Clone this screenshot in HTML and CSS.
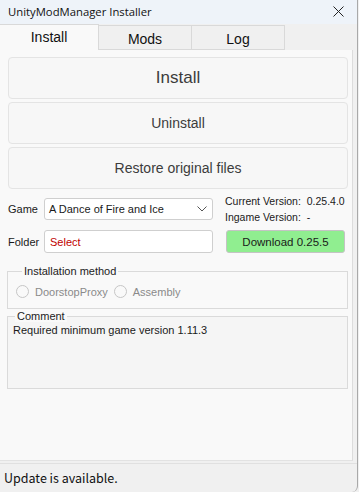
FILE: index.html
```html
<!DOCTYPE html>
<html lang="en">
<head>
<meta charset="UTF-8" />
<meta name="viewport" content="width=device-width, initial-scale=1" />
<title>UnityModManager Installer</title>
<link rel="stylesheet" href="styles.css">
</head>
<body>

<div class="window">
  <header class="titlebar">
    <span class="title">UnityModManager Installer</span>
    <svg class="close" width="11" height="11" viewBox="0 0 11 11">
      <path d="M0.5 0.5 L10.5 10.5 M10.5 0.5 L0.5 10.5" stroke="#222" stroke-width="1" fill="none"/>
    </svg>
  </header>

  <nav class="tabs">
    <div class="tab active">Install</div>
    <div class="tab">Mods</div>
    <div class="tab">Log</div>
  </nav>

  <main class="panel">
    <button class="btn btn-big">Install</button>
    <button class="btn">Uninstall</button>
    <button class="btn">Restore original files</button>

    <div class="form">
      <label class="lbl">Game</label>
      <div class="combo">
        <span>A Dance of Fire and Ice</span>
        <svg width="10" height="6" viewBox="0 0 10 6">
          <path d="M0.5 0.5 L5 5 L9.5 0.5" stroke="#555" stroke-width="1" fill="none"/>
        </svg>
      </div>
      <div class="versions">
        <div>Current Version:&nbsp; 0.25.4.0</div>
        <div>Ingame Version:&nbsp; -</div>
      </div>

      <label class="lbl">Folder</label>
      <div class="field">Select</div>
      <button class="btn-download">Download 0.25.5</button>
    </div>

    <fieldset class="group">
      <legend>Installation method</legend>
      <div class="radios">
        <label class="radio"><span class="dot"></span>DoorstopProxy</label>
        <label class="radio"><span class="dot"></span>Assembly</label>
      </div>
    </fieldset>

    <fieldset class="group comment">
      <legend>Comment</legend>
      <p>Required minimum game version 1.11.3</p>
    </fieldset>
  </main>

  <footer class="status">Update is available.</footer>
</div>

</body>
</html>
```

FILE: styles.css
```css
* {
  box-sizing: border-box;
  margin: 0;
  padding: 0;
}

body {
  background: #f0f0f0;
  width: 359px;
  height: 492px;
  overflow: hidden;
  font-family: "Liberation Sans", Arial, sans-serif;
  font-size: 11px;
  color: #1a1a1a;
}

.window {
  height: 492px;
  width: 358px;
  display: flex;
  flex-direction: column;
  border-right: 1px solid #a9a9a9;
  border-bottom-right-radius: 6px;
}

.titlebar {
  height: 24px;
  background: #eef3f9;
  display: flex;
  align-items: center;
  justify-content: space-between;
  padding: 0 13px 2px 8px;
}

.title {
  font-family: "Open Sans", "Noto Sans", sans-serif;
  font-size: 11.3px;
  color: #111;
}

.tabs {
  height: 26px;
  display: flex;
  align-items: flex-end;
  background: #f0f0f0;
  padding-right: 4px;
}

.tab {
  width: 94px;
  height: 25px;
  border: 1px solid #d9d9d9;
  margin-left: -1px;
  font-size: 14px;
  text-align: center;
  line-height: 26px;
  color: #111;
  background: #f0f0f0;
}

.tab.active {
  width: 99px;
  height: 26px;
  margin-left: 0;
  border-left: none;
  background: #f9f9f9;
  border-bottom: none;
  line-height: 24px;
}

.panel {
  flex: 1;
  background: #f9f9f9;
  margin-right: 4px;
  border-right: 1px solid #dcdcdc;
  border-bottom: 1px solid #e2e2e2;
  padding: 7px 4px 0 8px;
  display: flex;
  flex-direction: column;
}

.btn {
  height: 42px;
  width: 100%;
  margin-bottom: 3px;
  background: #f7f7f7;
  border: 1px solid #e4e4e4;
  border-radius: 4px;
  font-family: "Liberation Sans", Arial, sans-serif;
  font-size: 14px;
  color: #3c3c3c;
}

.btn-big {
  font-size: 17px;
}

.form {
  display: grid;
  grid-template-columns: 36px 169px 1fr;
  grid-template-rows: 23px 23px;
  row-gap: 10px;
  margin-top: 5px;
  align-items: center;
}

.combo,
.field {
  height: 22px;
  background: #fff;
  border: 1px solid #cfcfcf;
  border-radius: 3px;
  display: flex;
  align-items: center;
  justify-content: space-between;
  padding: 0 5px 0 4px;
}

.field {
  height: 23px;
  color: #c00000;
  padding-left: 5px;
}

.versions {
  align-self: start;
  margin: -4px 0 0 12px;
  line-height: 16px;
  font-size: 10.5px;
  white-space: nowrap;
}

.btn-download {
  height: 23px;
  width: 119px;
  margin-left: 13px;
  background: #90ee90;
  border: 1px solid #c4c4c4;
  border-radius: 3px;
  font-family: "Liberation Sans", Arial, sans-serif;
  font-size: 11.5px;
  color: #1a1a1a;
}

.group {
  border: 1px solid #dadada;
  padding: 0 8px;
  margin: 12px 0 0 -1px;
}

.group legend {
  margin-left: 6px;
  padding: 0 2px;
  color: #222;
}

.radios {
  display: flex;
  gap: 6px;
  height: 31px;
  align-items: center;
  padding-bottom: 2px;
  color: #8a8a8a;
}

.radio {
  display: flex;
  align-items: center;
  gap: 6px;
}

.dot {
  width: 13px;
  height: 13px;
  border: 1px solid #c6c6c6;
  border-radius: 50%;
  background: #f9f9f9;
}

.comment {
  margin-top: 1px;
  height: 79px;
  padding: 2px 5px 0;
  background: #f5f5f5;
}

.comment legend {
  margin-left: 2px;
  background: #f9f9f9;
}

.status {
  height: 29px;
  border-top: 1px solid #e0e0e0;
  margin-top: 2px;
  padding: 4px 4px 0;
  font-family: "Noto Sans CJK SC", "Noto Sans", sans-serif;
  font-size: 12.5px;
  color: #111;
}
```
